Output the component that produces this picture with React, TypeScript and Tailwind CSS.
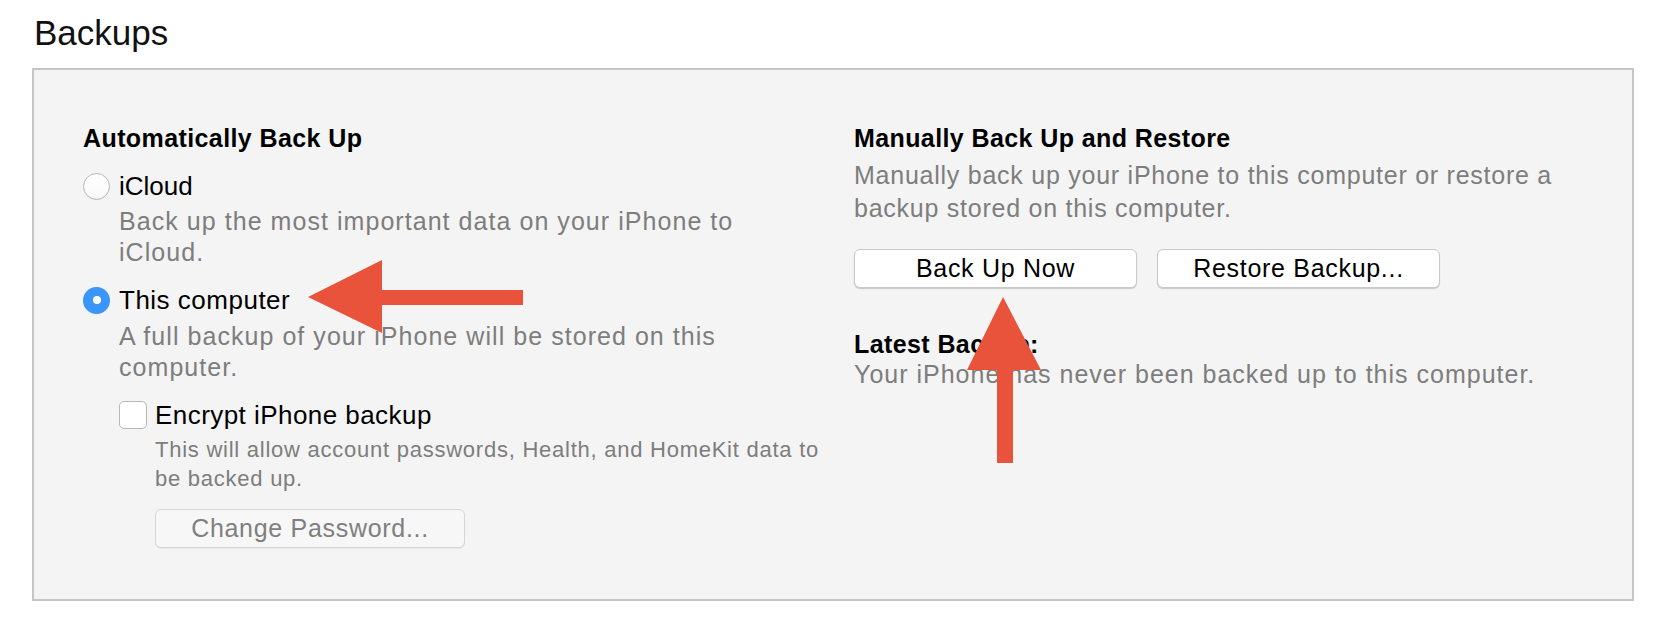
import React from "react";

const font = { fontFamily: '"Liberation Sans", Arial, sans-serif' };

// Push button in the old macOS style
const MacButton = ({
  children,
  disabled,
  className = "",
}: {
  children: React.ReactNode;
  disabled?: boolean;
  className?: string;
}) => (
  <button
    className={`h-[39px] rounded-[6px] border text-[25px] leading-none tracking-[0.7px] ${
      disabled
        ? "bg-[#f7f7f7] border-[#d6d6d6] text-[#7f7f7f] shadow-[0_1px_1px_rgba(0,0,0,0.06)]"
        : "bg-white border-[#c9c9c9] text-black shadow-[0_1px_1px_rgba(0,0,0,0.18)]"
    } ${className}`}
  >
    {children}
  </button>
);

const Radio = ({ checked }: { checked?: boolean }) =>
  checked ? (
    <span className="flex h-[27px] w-[27px] shrink-0 items-center justify-center rounded-full bg-[#3a96fb]">
      <span className="h-[8px] w-[8px] rounded-full bg-white" />
    </span>
  ) : (
    <span className="h-[27px] w-[27px] shrink-0 rounded-full border border-[#b8b8b8] bg-gradient-to-b from-white to-[#f9f9f9] shadow-[inset_0_-1px_1px_rgba(0,0,0,0.05)]" />
  );

// Red annotation arrows drawn on top of the screenshot
const Arrows = () => (
  <svg
    className="pointer-events-none absolute left-0 top-0"
    width="1678"
    height="622"
    viewBox="0 0 1678 622"
  >
    <polygon
      fill="#e9533b"
      points="308,297 382,260 382,290 523,290 523,305 382,305 382,333"
    />
    <polygon
      fill="#e9533b"
      points="1003,297 1041,370 1013,370 1013,463 997,463 997,370 967,370"
    />
  </svg>
);

export default function App() {
  return (
    <div className="relative h-[622px] w-[1678px] bg-white" style={font}>
      <h1 className="pl-[34px] pt-[13px] text-[35px] font-normal leading-[40px] text-[#111]">
        Backups
      </h1>

      <div className="ml-[32px] mt-[15px] flex h-[533px] w-[1602px] border-2 border-[#c6c6c6] bg-[#f4f4f4] pl-[49px] pt-[53px]">
        {/* Automatic backups */}
        <div className="w-[771px]">
          <h2 className="text-[25px] font-semibold leading-[30px] tracking-[0.4px] text-black">
            Automatically Back Up
          </h2>

          <div className="mt-[17px] flex h-[32px] items-center gap-[9px]">
            <Radio />
            <span className="text-[26px] leading-[32px] text-black">iCloud</span>
          </div>
          <p className="mt-[4px] w-[700px] pl-[36px] text-[25px] leading-[31px] tracking-[1.05px] text-[#7d7d7d]">
            Back up the most important data on your iPhone to iCloud.
          </p>

          <div className="mt-[16px] flex h-[32px] items-center gap-[9px]">
            <Radio checked />
            <span className="text-[26px] leading-[32px] tracking-[0.5px] text-black">
              This computer
            </span>
          </div>
          <p className="mt-[5px] w-[700px] pl-[36px] text-[25px] leading-[31px] tracking-[1.05px] text-[#7d7d7d]">
            A full backup of your iPhone will be stored on this computer.
          </p>

          <div className="pl-[36px]">
            <div className="mt-[16px] flex h-[32px] items-center gap-[8px]">
              <span className="h-[28px] w-[28px] shrink-0 rounded-[5px] border border-[#b8b8b8] bg-white" />
              <span className="text-[26px] leading-[32px] tracking-[0.45px] text-black">
                Encrypt iPhone backup
              </span>
            </div>
            <div className="pl-[36px]">
              <p className="mt-[4px] w-[680px] text-[22px] leading-[29px] tracking-[0.75px] text-[#7d7d7d]">
                This will allow account passwords, Health, and HomeKit data to be
                backed up.
              </p>
              <MacButton disabled className="mt-[16px] w-[310px]">
                Change Password...
              </MacButton>
            </div>
          </div>
        </div>

        {/* Manual backups */}
        <div className="flex-1">
          <h2 className="text-[25px] font-semibold leading-[30px] tracking-[0.4px] text-black">
            Manually Back Up and Restore
          </h2>
          <p className="mt-[6px] w-[730px] text-[25px] leading-[33px] tracking-[0.75px] text-[#7d7d7d]">
            Manually back up your iPhone to this computer or restore a backup
            stored on this computer.
          </p>
          <div className="mt-[24px] flex gap-[20px]">
            <MacButton className="w-[283px]">Back Up Now</MacButton>
            <MacButton className="w-[283px]">Restore Backup...</MacButton>
          </div>
          <h3 className="mt-[41px] text-[25px] font-semibold leading-[30px] tracking-[0.4px] text-black">
            Latest Backup:
          </h3>
          <p className="text-[25px] leading-[31px] tracking-[1px] text-[#7d7d7d]">
            Your iPhone has never been backed up to this computer.
          </p>
        </div>
      </div>

      <Arrows />
    </div>
  );
}
